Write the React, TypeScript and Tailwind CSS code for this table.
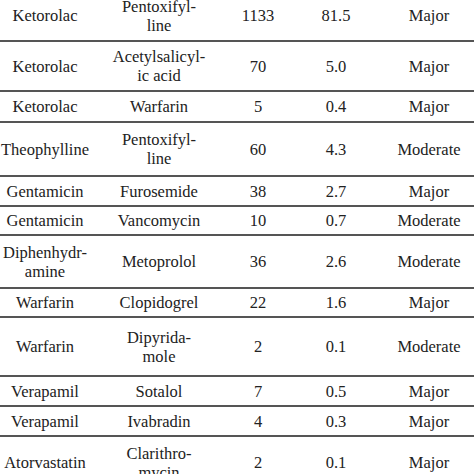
import React from "react";

type Row = {
  h: string;
  drug: string[];
  other: string[];
  count: string;
  pct: string;
  level: string;
};

const rows: Row[] = [
  { h: "h-[51px]", drug: ["Ketorolac"], other: ["Pentoxifyl-", "line"], count: "1133", pct: "81.5", level: "Major" },
  { h: "h-[50px]", drug: ["Ketorolac"], other: ["Acetylsalicyl-", "ic acid"], count: "70", pct: "5.0", level: "Major" },
  { h: "h-[31px]", drug: ["Ketorolac"], other: ["Warfarin"], count: "5", pct: "0.4", level: "Major" },
  { h: "h-[54px]", drug: ["Theophylline"], other: ["Pentoxifyl-", "line"], count: "60", pct: "4.3", level: "Moderate" },
  { h: "h-[30px]", drug: ["Gentamicin"], other: ["Furosemide"], count: "38", pct: "2.7", level: "Major" },
  { h: "h-[29px]", drug: ["Gentamicin"], other: ["Vancomycin"], count: "10", pct: "0.7", level: "Moderate" },
  { h: "h-[53px]", drug: ["Diphenhydr-", "amine"], other: ["Metoprolol"], count: "36", pct: "2.6", level: "Moderate" },
  { h: "h-[29px]", drug: ["Warfarin"], other: ["Clopidogrel"], count: "22", pct: "1.6", level: "Major" },
  { h: "h-[59px]", drug: ["Warfarin"], other: ["Dipyrida-", "mole"], count: "2", pct: "0.1", level: "Moderate" },
  { h: "h-[30px]", drug: ["Verapamil"], other: ["Sotalol"], count: "7", pct: "0.5", level: "Major" },
  { h: "h-[30px]", drug: ["Verapamil"], other: ["Ivabradin"], count: "4", pct: "0.3", level: "Major" },
  { h: "h-[53px]", drug: ["Atorvastatin"], other: ["Clarithro-", "mycin"], count: "2", pct: "0.1", level: "Major" },
];

const Cell = ({ lines }: { lines: string[] }) => (
  <div className="flex flex-col items-center justify-center text-center whitespace-nowrap">
    {lines.map((l) => (
      <span key={l}>{l}</span>
    ))}
  </div>
);

export default function App() {
  return (
    <div className="w-[474px] h-[474px] overflow-hidden bg-white">
      <div className="-mt-[9px] font-['Liberation_Serif','Times_New_Roman',serif] text-[16.5px] leading-[19px] text-[#222222]">
        {rows.map((r, i) => (
          <div
            key={i}
            className={`grid grid-cols-[90px_138px_60px_96px_90px] border-b-2 border-[#555555] ${r.h}`}
          >
            <Cell lines={r.drug} />
            <Cell lines={r.other} />
            <Cell lines={[r.count]} />
            <Cell lines={[r.pct]} />
            <Cell lines={[r.level]} />
          </div>
        ))}
      </div>
    </div>
  );
}
